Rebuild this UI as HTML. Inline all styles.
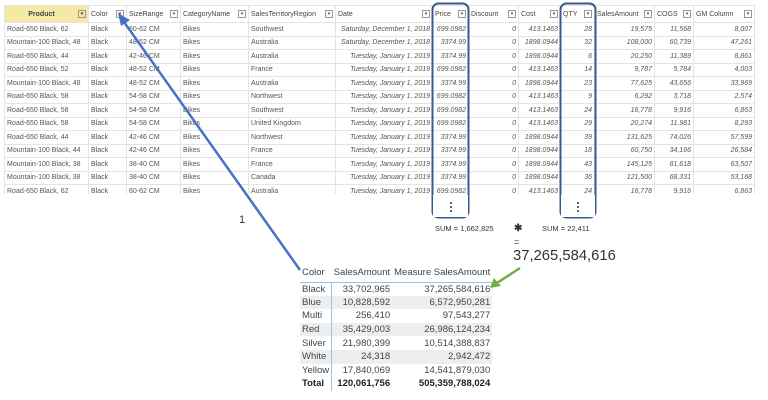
<!DOCTYPE html>
<html><head><meta charset="utf-8"><style>
*{margin:0;padding:0;box-sizing:border-box}
body{width:768px;height:400px;background:#fff;position:relative;overflow:hidden;font-family:"Liberation Sans",sans-serif;color:#333}
#grid{position:absolute;left:4px;top:5px;width:752px;height:189px;overflow:hidden}
#grid table{border-collapse:collapse;table-layout:fixed;font-size:7px}
#grid td,#grid th{height:13.5px;border:1px solid #e4e4e4;padding:0 2px;white-space:nowrap;overflow:hidden;color:#555;font-weight:normal}
#grid th{height:17px;text-align:left;color:#444;background:#fff;position:relative;padding-right:12px}
#grid th.p{background:#f5e9a8;text-align:center;font-weight:bold}
#grid th i{position:absolute;right:2px;top:4px;width:8px;height:8px;border:1px solid #999;font-style:normal;font-size:5px;line-height:6px;text-align:center}
.r{text-align:right}.it{font-style:italic}
#pt{position:absolute;left:300px;top:264px;font-size:9.5px;color:#444;border-collapse:collapse}
#pt td{height:13.6px;padding:0 2px;text-align:right;white-space:nowrap}
#pt td:first-child{text-align:left;border-right:1px solid #9cc3e6;width:31px}
#pt tr.s td{background:#eee}
#pt tr.h td{height:18px;border-bottom:1px solid #9cc3e6}
#pt tr.t td{font-weight:bold;color:#222}
.lbl{position:absolute;font-size:7.5px;color:#333}
</style></head><body>
<div id="grid"><table>
<colgroup><col style="width:84px"><col style="width:38px"><col style="width:54px"><col style="width:68px"><col style="width:87px"><col style="width:97px"><col style="width:36px"><col style="width:50px"><col style="width:42px"><col style="width:34px"><col style="width:60px"><col style="width:39px"><col style="width:61px"></colgroup>
<tr><th class="p">Product<i>▾</i></th><th>Color<i>▾</i></th><th>SizeRange<i>▾</i></th><th>CategoryName<i>▾</i></th><th>SalesTerritoryRegion<i>▾</i></th><th class="r">Date<i>▾</i></th><th>Price<i>▾</i></th><th>Discount<i>▾</i></th><th>Cost<i>▾</i></th><th>QTY<i>▾</i></th><th>SalesAmount<i>▾</i></th><th>COGS<i>▾</i></th><th>GM Column<i>▾</i></th></tr>
<tr><td>Road-650 Black, 62</td><td>Black</td><td>60-62 CM</td><td>Bikes</td><td>Southwest</td><td class="r it">Saturday, December 1, 2018</td><td class="r it">699.0982</td><td class="r it">0</td><td class="r it">413.1463</td><td class="r it">28</td><td class="r it">19,575</td><td class="r it">11,568</td><td class="r it">8,007</td></tr>
<tr><td>Mountain-100 Black, 48</td><td>Black</td><td>48-52 CM</td><td>Bikes</td><td>Australia</td><td class="r it">Saturday, December 1, 2018</td><td class="r it">3374.99</td><td class="r it">0</td><td class="r it">1898.0944</td><td class="r it">32</td><td class="r it">108,000</td><td class="r it">60,739</td><td class="r it">47,261</td></tr>
<tr><td>Road-650 Black, 44</td><td>Black</td><td>42-46 CM</td><td>Bikes</td><td>Australia</td><td class="r it">Tuesday, January 1, 2019</td><td class="r it">3374.99</td><td class="r it">0</td><td class="r it">1898.0944</td><td class="r it">6</td><td class="r it">20,250</td><td class="r it">11,389</td><td class="r it">8,861</td></tr>
<tr><td>Road-650 Black, 52</td><td>Black</td><td>48-52 CM</td><td>Bikes</td><td>France</td><td class="r it">Tuesday, January 1, 2019</td><td class="r it">699.0982</td><td class="r it">0</td><td class="r it">413.1463</td><td class="r it">14</td><td class="r it">9,787</td><td class="r it">5,784</td><td class="r it">4,003</td></tr>
<tr><td>Mountain-100 Black, 48</td><td>Black</td><td>48-52 CM</td><td>Bikes</td><td>Australia</td><td class="r it">Tuesday, January 1, 2019</td><td class="r it">3374.99</td><td class="r it">0</td><td class="r it">1898.0944</td><td class="r it">23</td><td class="r it">77,625</td><td class="r it">43,656</td><td class="r it">33,969</td></tr>
<tr><td>Road-650 Black, 58</td><td>Black</td><td>54-58 CM</td><td>Bikes</td><td>Northwest</td><td class="r it">Tuesday, January 1, 2019</td><td class="r it">699.0982</td><td class="r it">0</td><td class="r it">413.1463</td><td class="r it">9</td><td class="r it">6,292</td><td class="r it">3,718</td><td class="r it">2,574</td></tr>
<tr><td>Road-650 Black, 58</td><td>Black</td><td>54-58 CM</td><td>Bikes</td><td>Southwest</td><td class="r it">Tuesday, January 1, 2019</td><td class="r it">699.0982</td><td class="r it">0</td><td class="r it">413.1463</td><td class="r it">24</td><td class="r it">16,778</td><td class="r it">9,916</td><td class="r it">6,863</td></tr>
<tr><td>Road-650 Black, 58</td><td>Black</td><td>54-58 CM</td><td>Bikes</td><td>United Kingdom</td><td class="r it">Tuesday, January 1, 2019</td><td class="r it">699.0982</td><td class="r it">0</td><td class="r it">413.1463</td><td class="r it">29</td><td class="r it">20,274</td><td class="r it">11,981</td><td class="r it">8,293</td></tr>
<tr><td>Road-650 Black, 44</td><td>Black</td><td>42-46 CM</td><td>Bikes</td><td>Northwest</td><td class="r it">Tuesday, January 1, 2019</td><td class="r it">3374.99</td><td class="r it">0</td><td class="r it">1898.0944</td><td class="r it">39</td><td class="r it">131,625</td><td class="r it">74,026</td><td class="r it">57,599</td></tr>
<tr><td>Mountain-100 Black, 44</td><td>Black</td><td>42-46 CM</td><td>Bikes</td><td>France</td><td class="r it">Tuesday, January 1, 2019</td><td class="r it">3374.99</td><td class="r it">0</td><td class="r it">1898.0944</td><td class="r it">18</td><td class="r it">60,750</td><td class="r it">34,166</td><td class="r it">26,584</td></tr>
<tr><td>Mountain-100 Black, 38</td><td>Black</td><td>38-40 CM</td><td>Bikes</td><td>France</td><td class="r it">Tuesday, January 1, 2019</td><td class="r it">3374.99</td><td class="r it">0</td><td class="r it">1898.0944</td><td class="r it">43</td><td class="r it">145,125</td><td class="r it">81,618</td><td class="r it">63,507</td></tr>
<tr><td>Mountain-100 Black, 38</td><td>Black</td><td>38-40 CM</td><td>Bikes</td><td>Canada</td><td class="r it">Tuesday, January 1, 2019</td><td class="r it">3374.99</td><td class="r it">0</td><td class="r it">1898.0944</td><td class="r it">36</td><td class="r it">121,500</td><td class="r it">68,331</td><td class="r it">53,168</td></tr>
<tr><td>Road-650 Black, 62</td><td>Black</td><td>60-62 CM</td><td>Bikes</td><td>Australia</td><td class="r it">Tuesday, January 1, 2019</td><td class="r it">699.0982</td><td class="r it">0</td><td class="r it">413.1463</td><td class="r it">24</td><td class="r it">16,778</td><td class="r it">9,916</td><td class="r it">6,863</td></tr>
</table></div>

<svg width="768" height="400" style="position:absolute;left:0;top:0" xmlns="http://www.w3.org/2000/svg">
<rect x="432.5" y="3.5" width="36" height="214" rx="6" fill="none" stroke="#3a5a92" stroke-width="2"/>
<rect x="560.5" y="3.5" width="35" height="214" rx="6" fill="none" stroke="#3a5a92" stroke-width="2"/>
<rect x="433" y="195" width="35" height="22" fill="#fff"/>
<rect x="561" y="195" width="34" height="22" fill="#fff"/>
<g fill="#333"><circle cx="451" cy="203" r="1"/><circle cx="451" cy="207" r="1"/><circle cx="451" cy="211" r="1"/><circle cx="578" cy="203" r="1"/><circle cx="578" cy="207" r="1"/><circle cx="578" cy="211" r="1"/></g>
<line x1="300" y1="270" x2="124" y2="22" stroke="#4472c4" stroke-width="2.5"/>
<polygon points="118,13 130,20 121,26" fill="#4472c4"/>
<line x1="520" y1="268" x2="497" y2="283" stroke="#70ad47" stroke-width="2.5"/>
<polygon points="490,288 494,278 501,286" fill="#70ad47"/>
</svg>
<div class="lbl" style="left:239px;top:214px;font-size:11px">1</div>
<div class="lbl" style="left:435px;top:224px">SUM = 1,662,825</div>
<div class="lbl" style="left:542px;top:224px">SUM = 22,411</div>
<div class="lbl" style="left:514px;top:223px;font-size:10px;font-weight:bold">✱</div>
<div class="lbl" style="left:514px;top:237px;font-size:9px">=</div>
<div class="lbl" style="left:513px;top:248px;font-size:14.8px;color:#333">37,265,584,616</div>

<table id="pt">
<tr class="h"><td style="border-right:none">Color</td><td>SalesAmount</td><td>Measure SalesAmount</td></tr>
<tr><td>Black</td><td>33,702,965</td><td>37,265,584,616</td></tr>
<tr class="s"><td>Blue</td><td>10,828,592</td><td>6,572,950,281</td></tr>
<tr><td>Multi</td><td>256,410</td><td>97,543,277</td></tr>
<tr class="s"><td>Red</td><td>35,429,003</td><td>26,986,124,234</td></tr>
<tr><td>Silver</td><td>21,980,399</td><td>10,514,388,837</td></tr>
<tr class="s"><td>White</td><td>24,318</td><td>2,942,472</td></tr>
<tr><td>Yellow</td><td>17,840,069</td><td>14,541,879,030</td></tr>
<tr class="t"><td>Total</td><td>120,061,756</td><td>505,359,788,024</td></tr>
</table>
</body></html>
